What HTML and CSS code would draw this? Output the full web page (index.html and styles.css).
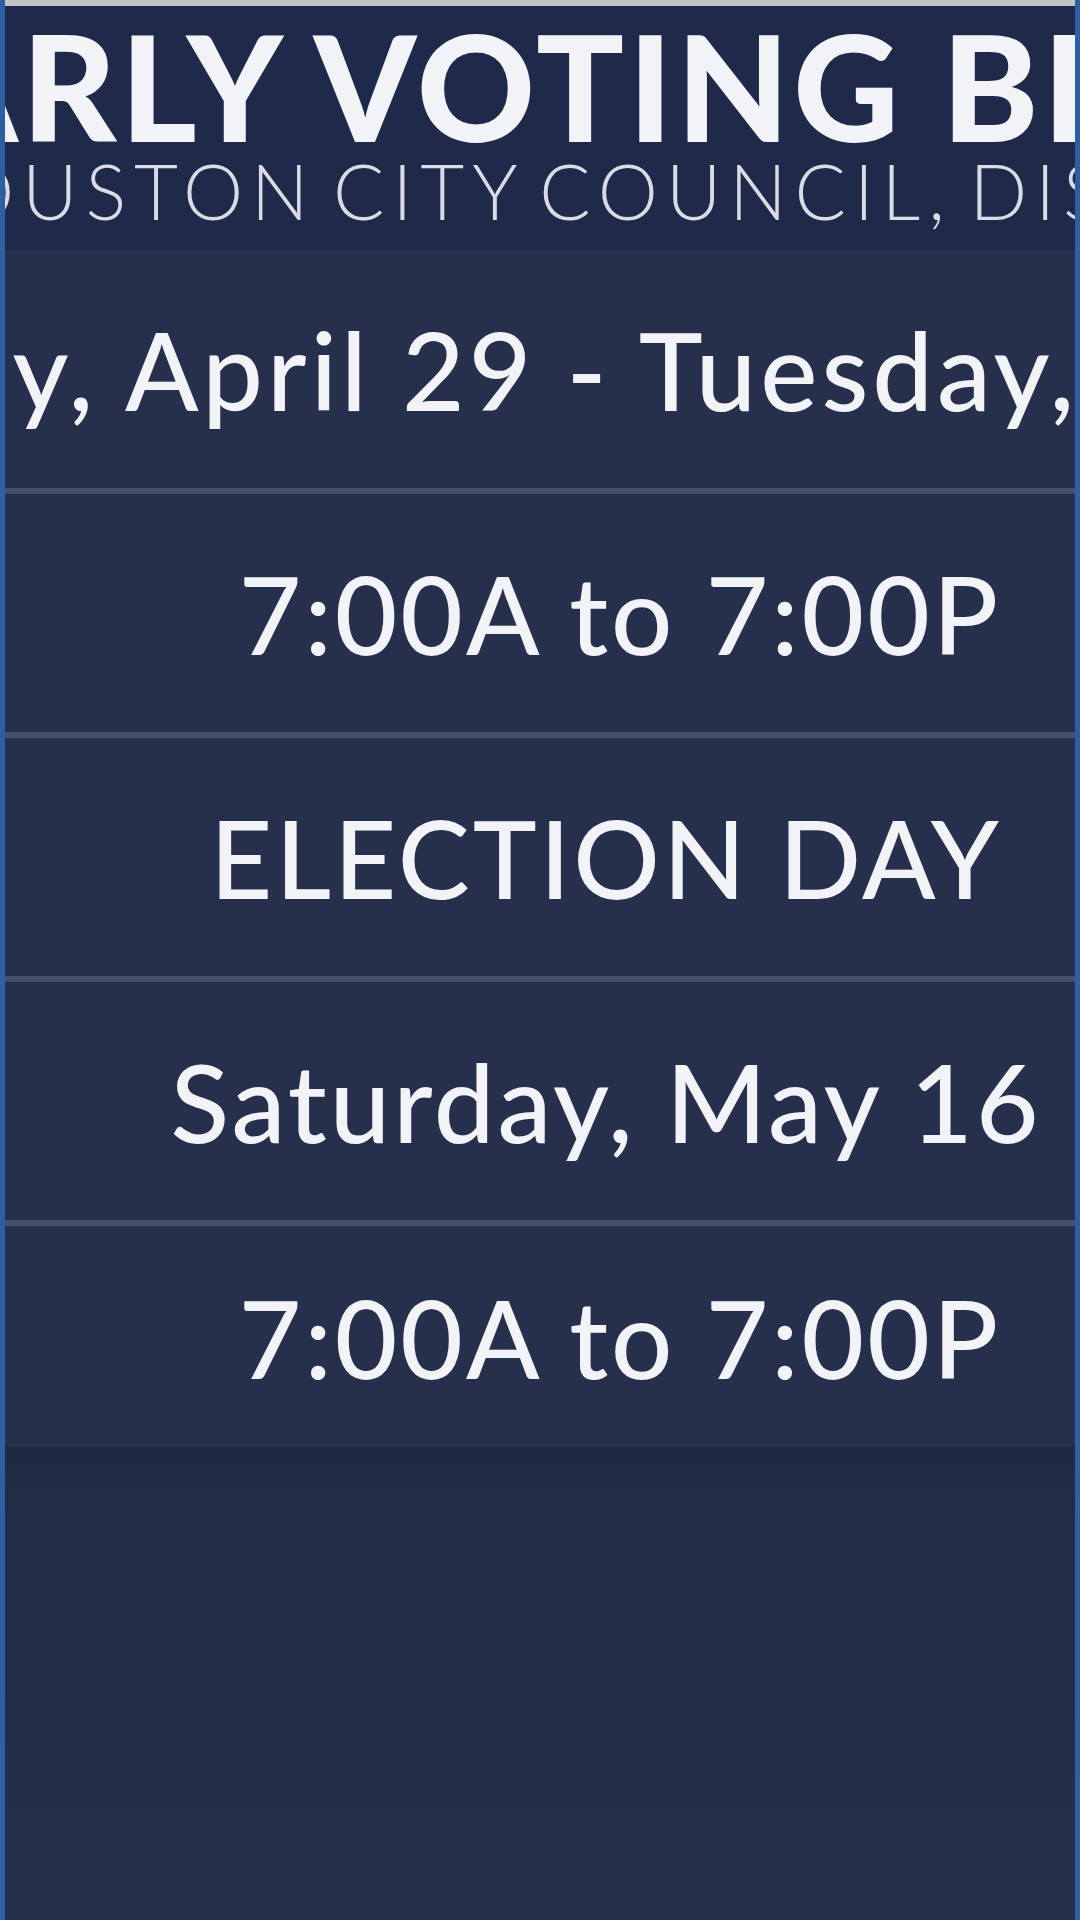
FILE: index.html
```html
<!DOCTYPE html>
<html lang="en">
<head>
    <meta charset="UTF-8">
    <meta name="viewport" content="width=device-width, initial-scale=1.0">
    <title>Early Voting Begins</title>
    <link rel="stylesheet" href="styles.css">
</head>
<body>
    <div class="frame">
        <div class="topStrip"></div>
        <!-- Banner across the top -->
        <div class="banner">
            <h1 class="title"><span>EARLY VOTING BEGINS</span></h1>
            <h2 class="subtitle"><span>HOUSTON CITY COUNCIL, DISTRICT B</span></h2>
        </div>
        <div class="schedule">
            <div class="row range"><span>Wednesday, April 29 - Tuesday, May 12</span></div>
            <div class="row time"><span>7:00A to 7:00P</span></div>
            <div class="row"><span>ELECTION DAY</span></div>
            <div class="row"><span>Saturday, May 16</span></div>
            <div class="row time"><span>7:00A to 7:00P</span></div>
        </div>
        <div class="footer"></div>
    </div>
</body>
</html>
```

FILE: styles.css
```css
* {
    box-sizing: border-box;
    margin: 0;
    padding: 0;
}

body {
    background: #232d47;
    font-family: 'Lato', 'Liberation Sans', sans-serif;
    color: #f2f3f6;
}

.frame {
    width: 1080px;
    height: 1920px;
    border-left: 5px solid #2c5fa3;
    border-right: 5px solid #2c5fa3;
    display: flex;
    flex-direction: column;
    overflow: hidden;
}

.topStrip {
    height: 6px;
    background: #c4c4c6;
    flex-shrink: 0;
}

.banner {
    height: 244px;
    background: #1f2a4b;
    display: flex;
    flex-direction: column;
    align-items: center;
    flex-shrink: 0;
}

.banner h1,
.banner h2 {
    display: flex;
    justify-content: center;
    width: 100%;
    white-space: nowrap;
}

.title {
    font-size: 146px;
    font-weight: 900;
    line-height: 134px;
    margin-top: 13px;
    padding-left: 235px;
    letter-spacing: 4px;
}

.subtitle {
    font-size: 76px;
    font-weight: 300;
    line-height: 1;
    padding-left: 236px;
    color: #d9dce4;
    letter-spacing: 8px;
    word-spacing: -12px;
}

.schedule {
    background: #26304d;
    display: flex;
    flex-direction: column;
    flex-shrink: 0;
}

.row {
    height: 244px;
    border-bottom: 6px solid #434e6d;
    display: flex;
    justify-content: center;
    align-items: center;
    padding-left: 132px;
    font-size: 108px;
    font-weight: 500;
    letter-spacing: 3px;
    white-space: nowrap;
}

.row:last-child {
    height: 221px;
    border-bottom: none;
}

.row.time {
    padding-left: 160px;
}

.row.range {
    padding-left: 0;
    padding-right: 110px;
    letter-spacing: 4px;
}

.footer {
    flex: 1;
    background: linear-gradient(#1f2940, #232d47 80px, #242f49);
}
```
